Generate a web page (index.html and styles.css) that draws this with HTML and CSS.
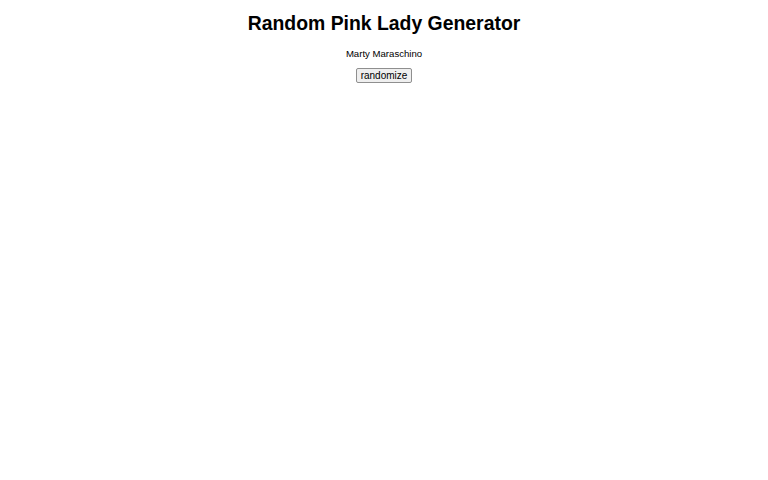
FILE: index.html
```html
<!DOCTYPE html>
<html>
<head>
<meta charset="utf-8">
<title>Random Pink Lady Generator</title>
<link rel="stylesheet" href="styles.css">
</head>
<body>
<main class="app">
  <h1 class="title">Random Pink Lady Generator</h1>
  <p class="name">Marty Maraschino</p>
  <button class="randomize" type="button">randomize</button>
</main>
</body>
</html>
```
FILE: styles.css
```css
body {
  margin: 8px;
  background: #fff;
  color: #000;
  font-family: "Liberation Sans", Arial, sans-serif;
}

.app {
  display: flex;
  flex-direction: column;
  align-items: center;
}

.title {
  font-size: 19.4px;
  font-weight: bold;
  margin: 4px 0 0;
  line-height: 23px;
}

.name {
  font-size: 9.6px;
  margin: 13px 0 0;
  line-height: 11px;
}

.randomize {
  margin-top: 9px;
  font-family: "Liberation Sans", Arial, sans-serif;
  font-size: 10px;
  line-height: 11px;
  padding: 1px 4px 1px;
  background: #efefef;
  border: 1px solid #8f8f8f;
  border-radius: 2px;
  color: #000;
}
```
